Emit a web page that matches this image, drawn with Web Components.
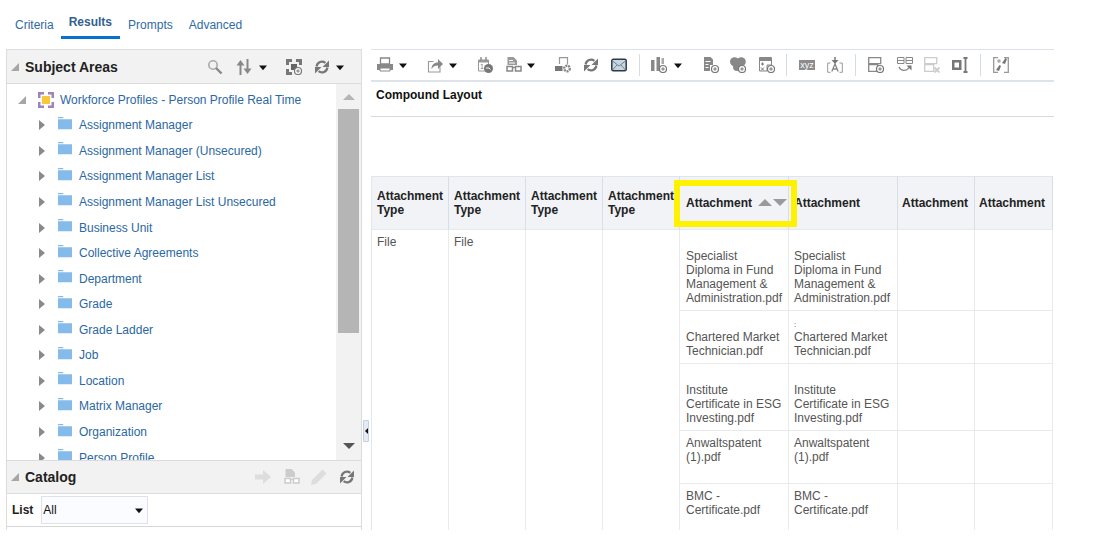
<!DOCTYPE html>
<html>
<head>
<meta charset="utf-8">
<title>Results</title>
<style>
  html, body { margin: 0; height: 100%; background: #fff; overflow: hidden; }
  body { font: 12px "Liberation Sans", Arial, sans-serif; color: #333; }
</style>
</head>
<body>
<oa-tabs></oa-tabs>
<oa-workspace>
  <oa-side-panel slot="side"></oa-side-panel>
  <oa-results slot="main"></oa-results>
</oa-workspace>

<script>
const PLUS = '<circle cx="12" cy="12" r="3.5" fill="#fff" stroke="#777" stroke-width="1.2"/><path d="M10.2 12h3.6M12 10.2v3.6" stroke="#777"/>'
const ICONS = {
  caret: '<path d="M1 3h10L6 9z" fill="#111"/>',
  search: '<circle cx="6" cy="6" r="4.2" fill="none" stroke="#aaa" stroke-width="1.6"/><path d="M9 9l5.5 5.5" stroke="#888" stroke-width="2.4"/>',
  sort: '<path d="M4.5 16V4" stroke="#888" stroke-width="2"/><path d="M.5 6.5L4.5 1l4 5.5z" fill="#888"/><path d="M11.5 0v12" stroke="#888" stroke-width="2"/><path d="M7.5 9.5l4 5.5 4-5.5z" fill="#888"/>',
  addbox: '<path d="M0 0h6v3H3v3H0zM10 0h6v6h-3V3h-3zM0 10h3v3h3v3H0z" fill="#777"/><path d="M5 5h6v4H9v2H5z" fill="#666"/>' + PLUS,
  refresh: '<path d="M2.6 7.5A5.5 5.5 0 0 1 11.4 3.8" fill="none" stroke="#777" stroke-width="2.2"/><path d="M15 1.5v6.5H8.5z" fill="#777"/><path d="M13.4 8.500A5.5 5.5 0 0 1 4.600 12.200" fill="none" stroke="#777" stroke-width="2.2"/><path d="M1 14.500V8h6.500z" fill="#777"/>',
  print: '<path d="M3.5 1h9v6h-9z" fill="none" stroke="#888" stroke-width="1.3"/><path d="M0 7h16v6H0z" fill="#888"/><path d="M3 11h10v3H3z" fill="#fff" stroke="#888"/>',
  share: '<path d="M1.5 4.5h5M1.5 4v11H13V10" fill="none" stroke="#999" stroke-width="1.1"/><path d="M4.5 12c0-4 2.500-6.500 6.500-6.500V2l5 5-5 5V8.500c-3 0-5 1-6.500 3.500z" fill="#888"/>',
  sched: '<path d="M1.5 3h10v11h-10z" fill="none" stroke="#999"/><path d="M1.5 3h10v2.500h-10z" fill="#999"/><path d="M4 0v3.500M9 0v3.500" stroke="#888" stroke-width="1.4"/><text x="3" y="12" font-size="7" font-family="Liberation Sans" fill="#777">1</text><circle cx="11.5" cy="11.5" r="4.5" fill="#777"/><path d="M9 11h3l1.500 1.500" fill="none" stroke="#fff"/>',
  glasses: '<path d="M1.5 0h6l3.500 3.500V8H1.5z" fill="#999"/><path d="M3 3.500h4M3 6h6" stroke="#fff"/><path d="M1 9.500h5.500V14H1zM9.500 9.500H15V14H9.500z" fill="#fff" stroke="#888" stroke-width="1.5"/><path d="M6.500 10.500h3" stroke="#888" stroke-width="1.2"/>',
  gearfile: '<path d="M4.5 7V.7h8V7.500" fill="none" stroke="#999" stroke-width="1.2"/><path d="M0 9h7.500v5H0z" fill="#777"/><circle cx="12" cy="11.500" r="2.800" fill="none" stroke="#888" stroke-width="2.4" stroke-dasharray="2 .8"/>',
  mail: '<rect x=".8" y="2.3" width="14.4" height="11.4" rx="1.5" fill="#c9d6e2" stroke="#2b3a46" stroke-width="1.5"/><path d="M1.5 4l6.500 5 6.500-5M1.5 13l4.500-5M14.500 13L10 8" fill="none" stroke="#6f8292"/>',
  chart: '<path d="M0 3h3.500v11H0zM5.500 0H9v14H5.500z" fill="#888"/><path d="M10.500 1H13v6h-2.500z" fill="#aaa"/>' + PLUS,
  tableadd: '<path d="M1 0h6.500L10 2.500V8H7v6H1z" fill="#888"/><path d="M2.500 4.500h5M2.500 7.500h3M2.500 10.500h3" stroke="#fff"/>' + PLUS,
  venn: '<circle cx="4.6" cy="4.8" r="4.6" fill="#888"/><circle cx="11.2" cy="4.8" r="4.6" fill="#888"/><circle cx="7" cy="10" r="4" fill="#888"/>' + PLUS,
  calc: '<path d="M.5 .5h12V8H8v6H.5z" fill="#fff" stroke="#888"/><path d="M1 1h11v3H1z" fill="#888"/><path d="M2 7h3M3.500 5.500v3M2 10.500l3 3M5 10.500l-3 3" stroke="#777"/>' + PLUS,
  textup: '<path d="M3.500 6H.7v9.300h2.800M12.500 6h2.800v9.300h-2.800" fill="none" stroke="#999"/><path d="M8 0v4" stroke="#777" stroke-width="1.5"/><path d="M4.500 3h7L8 7z" fill="#777"/><path d="M4.800 14.500L8 7l3.200 7.500M6 12h4" fill="none" stroke="#888" stroke-width="1.3"/>',
  rowadd: '<path d="M.7 .7h12v6h-12zM.7 7.700h9v6.600h-9z" fill="none" stroke="#888" stroke-width="1.3"/>' + PLUS,
  swap: '<path d="M.5 .5h6.500v6H.5zM9 .5h6.500v6H9z" fill="none" stroke="#888"/><path d="M.5 3.500H7M9 3.500h6.500" stroke="#888"/><path d="M2 10c2 4.500 7.500 4.500 10 .5" fill="none" stroke="#888" stroke-width="1.3"/><path d="M9.500 8.500h5v5z" fill="#777"/>',
  rowdel: '<path d="M.7 .7h12v6h-12zM.7 7.700h9v6.600h-9z" fill="none" stroke="#ccc" stroke-width="1.3"/><path d="M10.500 10.500l5 5M15.500 10.500l-5 5" stroke="#ccc" stroke-width="1.8"/>',
  column: '<path d="M0 3h9.500v10H0z" fill="#777"/><path d="M2.500 5.500H7v5H2.500z" fill="#fff"/><path d="M13.500 1v14M11.500 1h4M11.500 15h4" stroke="#777" stroke-width="1.8"/>',
  steps: '<path d="M5 .7H.7v14.600H5M11 .7h4.300v14.600H11" fill="none" stroke="#999" stroke-width="1.3"/><path d="M9 6l3.500-5 1.500 1-2 5zM3 13l3.500-5L8 9l-2 5z" fill="#777"/><circle cx="6" cy="4" r="1.8" fill="#aaa"/>',
  arrow: '<path d="M0 5.500h8V1L16 8l-8 7v-4.500H0z" fill="#ddd"/>',
  glasses2: '<path d="M1.500 0h6L11 3.500V8H1.500z" fill="#ccc"/><path d="M1 9.500h5.500V14H1zM9.500 9.500H15V14H9.500z" fill="#fff" stroke="#ccc" stroke-width="1.5"/><path d="M6.500 10.500h3" stroke="#ccc"/>',
  pencil: '<path d="M0 16l1-5L11.500 .5l4 4L5 15z" fill="#ddd"/>',
  folder: '<path d="M0 0h6v1.300H0zM0 2.700h16V14H0z" fill="#85bbea"/>',
  root: '<path d="M0 0h6v2.500H2.500V6H0zM10 0h6v6h-2.500V2.500H10zM0 10h2.500v3.500H6V16H0zM13.500 10H16v6h-6v-2.500h3.500z" fill="#a082bd"/><rect x="4" y="4" width="8" height="8" fill="#f8c83c"/>'
}

// one small svg, picked by name
class OaIcon extends HTMLElement {
  constructor() {
    super()
    this.attachShadow({ mode: "open" })
  }
  connectedCallback() {
    const name = this.getAttribute("name")
    const w = this.getAttribute("w") || 16
    const h = this.getAttribute("h") || w
    const box = this.getAttribute("box") || "0 0 16 16"
    this.shadowRoot.innerHTML = `
      <style>
        :host { display: block; flex: none; line-height: 0; }
        svg { display: block; }
      </style>
      <svg width="${w}" height="${h}" viewBox="${box}">${ICONS[name]}</svg>
    `
  }
}
customElements.define("oa-icon", OaIcon)

function caret() {
  return `<oa-icon name="caret" w="10" h="8" box="0 0 12 10"></oa-icon>`
}

class OaTabs extends HTMLElement {
  constructor() {
    super()
    this.attachShadow({ mode: "open" })
    this.shadowRoot.innerHTML = `
      <style>
        :host { display: flex; height: 39px; padding-left: 7px; box-sizing: border-box; color: #2f6aa5; font-size: 12px; }
        div { padding: 18px 8px 0; box-sizing: border-box; height: 39px; white-space: nowrap; }
        .on { padding: 15px 8px 0; margin-left: -1px; font-weight: bold; color: #33618f; border-bottom: 3px solid #0572ce; }
      </style>
      <div>Criteria</div><div class="on">Results</div><div>Prompts</div><div>Advanced</div>
    `
  }
}
customElements.define("oa-tabs", OaTabs)

class OaWorkspace extends HTMLElement {
  constructor() {
    super()
    this.attachShadow({ mode: "open" })
    this.shadowRoot.innerHTML = `
      <style>
        :host { display: flex; height: 491px; margin-top: 10px; padding-left: 6px; overflow: hidden; }
        .split { flex: none; width: 9px; padding-top: 371px; box-sizing: border-box; }
        .grip { width: 6px; height: 22px; margin-left: 1px; background: #e4ebf3; border: 1px solid #c4d0dc; border-radius: 1px; box-sizing: border-box; display: flex; align-items: center; justify-content: center; }
        .grip i { border: 3px solid transparent; border-right: 3px solid #111; border-left: 0; }
      </style>
      <slot name="side"></slot>
      <div class="split"><div class="grip"><i></i></div></div>
      <slot name="main"></slot>
    `
  }
}
customElements.define("oa-workspace", OaWorkspace)

class OaPanelHead extends HTMLElement {
  constructor() {
    super()
    this.attachShadow({ mode: "open" })
    this.shadowRoot.innerHTML = `
      <style>
        :host { display: flex; align-items: center; height: 34px; flex: none; box-sizing: border-box; background: #f2f2f2; border-bottom: 1px solid #dcdcdc; padding-left: 4px; }
        i { width: 0; height: 0; border-style: solid; border-width: 0 0 8px 8px; border-color: transparent transparent #a6a6a6 transparent; }
        b { margin-left: 6px; font-size: 14px; color: #222; }
        span { flex: 1; }
      </style>
      <i></i><b><slot name="title"></slot></b><span></span><slot></slot>
    `
  }
}
customElements.define("oa-panel-head", OaPanelHead)

class OaTreeItem extends HTMLElement {
  constructor() {
    super()
    this.attachShadow({ mode: "open" })
  }
  connectedCallback() {
    this.shadowRoot.innerHTML = `
      <style>
        :host { display: flex; align-items: center; height: 25.57px; padding-left: 32px; color: #2a67a3; white-space: nowrap; }
        i { width: 0; height: 0; border-style: solid; border-width: 5px 0 5px 6px; border-color: transparent transparent transparent #8a8a8a; margin-right: 12px; }
        oa-icon { margin-top: -3px; }
        span { margin-left: 6px; }
      </style>
      <i></i><oa-icon name="folder" w="16" h="14"></oa-icon><span><slot></slot></span>
    `
  }
}
customElements.define("oa-tree-item", OaTreeItem)

class OaTree extends HTMLElement {
  constructor() {
    super()
    this.attachShadow({ mode: "open" })
    const items = ["Assignment Manager", "Assignment Manager (Unsecured)", "Assignment Manager List",
      "Assignment Manager List Unsecured", "Business Unit", "Collective Agreements", "Department",
      "Grade", "Grade Ladder", "Job", "Location", "Matrix Manager", "Organization", "Person Profile"]
    this.shadowRoot.innerHTML = `
      <style>
        :host { display: flex; flex: 1; min-height: 0; overflow: hidden; }
        .list { flex: 1; padding-top: 3px; overflow: hidden; }
        .root { display: flex; align-items: center; height: 25.5px; padding-left: 11px; color: #2a67a3; white-space: nowrap; }
        .root i { width: 0; height: 0; border-style: solid; border-width: 0 0 8px 8px; border-color: transparent transparent #a6a6a6 transparent; margin-right: 12px; }
        .root span { margin-left: 6px; }
        .bar { flex: none; width: 25px; background: #f2f2f2; display: flex; flex-direction: column; align-items: center; }
        .up, .down { flex: none; height: 25px; display: flex; align-items: center; justify-content: center; }
        .up i { border: 6px solid transparent; border-top: 0; border-bottom: 6px solid #b5b5b5; }
        .down { margin-top: auto; margin-bottom: 2px; }
        .down i { border: 6px solid transparent; border-bottom: 0; border-top: 6px solid #555; }
        .thumb { width: 21px; height: 224px; background: #b5b5b5; }
      </style>
      <div class="list">
        <div class="root"><i></i><oa-icon name="root"></oa-icon><span>Workforce Profiles - Person Profile Real Time</span></div>
        ${items.map(t => `<oa-tree-item>${t}</oa-tree-item>`).join("")}
      </div>
      <div class="bar">
        <div class="up"><i></i></div>
        <div class="thumb"></div>
        <div class="down"><i></i></div>
      </div>
    `
  }
}
customElements.define("oa-tree", OaTree)

class OaSidePanel extends HTMLElement {
  constructor() {
    super()
    this.attachShadow({ mode: "open" })
    this.shadowRoot.innerHTML = `
      <style>
        :host { display: flex; flex-direction: column; flex: none; width: 356px; height: 481px; box-sizing: border-box; border: 1px solid #dcdcdc; border-bottom: 0; }
        .tools { display: flex; align-items: center; }
        .list { display: flex; align-items: center; flex: none; height: 33px; margin-bottom: 3px; padding-left: 5px; box-sizing: border-box; border-bottom: 1px solid #d6d6d6; color: #222; }
        .select { display: flex; align-items: center; justify-content: space-between; width: 107px; height: 28px; margin-left: 8px; padding: 0 3px 0 1px; box-sizing: border-box; background: #fafcff; border: 1px solid #dfe3e8; color: #111; }
        .catalog { border-top: 1px solid #dcdcdc; }
      </style>
      <oa-panel-head>
        <span slot="title">Subject Areas</span>
        <div class="tools" style="padding-right:16px">
          <oa-icon name="search" style="margin-right:13px"></oa-icon>
          <oa-icon name="sort" style="margin-right:6px"></oa-icon>
          ${caret()}
          <oa-icon name="addbox" style="margin:0 12px 0 18px"></oa-icon>
          <oa-icon name="refresh" style="margin-right:5px"></oa-icon>
          ${caret()}
        </div>
      </oa-panel-head>
      <oa-tree></oa-tree>
      <oa-panel-head class="catalog">
        <span slot="title">Catalog</span>
        <div class="tools" style="padding-right:6px">
          <oa-icon name="arrow" style="margin-right:13px"></oa-icon>
          <oa-icon name="glasses2" style="margin-right:11px"></oa-icon>
          <oa-icon name="pencil" style="margin-right:12px"></oa-icon>
          <oa-icon name="refresh"></oa-icon>
        </div>
      </oa-panel-head>
      <div class="list">
        <b>List</b>
        <div class="select"><span>All</span>${caret()}</div>
      </div>
    `
  }
}
customElements.define("oa-side-panel", OaSidePanel)

class OaToolbar extends HTMLElement {
  constructor() {
    super()
    this.attachShadow({ mode: "open" })
    // name, gap before it
    const row = [["print", 6], ["caret", 5], ["share", 19], ["caret", 5], ["sched", 19], ["glasses", 13], ["caret", 4],
      ["gearfile", 19], ["refresh", 12], ["mail", 12], ["|", 12], ["chart", 11], ["caret", 6], ["tableadd", 20],
      ["venn", 11], ["calc", 13], ["|", 11], ["xyz", 12], ["textup", 12], ["|", 12], ["rowadd", 12], ["swap", 13],
      ["rowdel", 11], ["column", 12], ["|", 12], ["steps", 12]]
    this.shadowRoot.innerHTML = `
      <style>
        :host { display: flex; align-items: center; flex: none; height: 33px; box-sizing: border-box; border-top: 1px solid #dde3ea; border-bottom: 2px solid #dde3ea; }
        .sep { flex: none; width: 1px; height: 22px; background: #d5dbe1; }
        .xyz { flex: none; width: 16px; height: 10px; background: #8c8c8c; color: #fff; font-size: 9px; line-height: 10px; text-align: center; overflow: hidden; }
      </style>
      ${row.map(([n, g]) => {
        const st = `margin-left:${g}px`
        if (n === "|") return `<div class="sep" style="${st}"></div>`
        if (n === "xyz") return `<div class="xyz" style="${st}">xyz</div>`
        if (n === "caret") return `<oa-icon name="caret" w="10" h="8" box="0 0 12 10" style="${st}"></oa-icon>`
        return `<oa-icon name="${n}" style="${st}"></oa-icon>`
      }).join("")}
    `
  }
}
customElements.define("oa-toolbar", OaToolbar)

class OaGrid extends HTMLElement {
  constructor() {
    super()
    this.attachShadow({ mode: "open" })
    const names = [["Specialist", "Diploma in Fund", "Management &amp;", "Administration.pdf"],
      ["Chartered Market", "Technician.pdf"], ["Institute", "Certificate in ESG", "Investing.pdf"],
      ["Anwaltspatent", "(1).pdf"], ["BMC -", "Certificate.pdf"]]
    // blank lines above and below the file name, as in the report
    const lead = [1, 1, 1, 0, 0]
    const tail = [0, 0, 0, 1, 2]
    const rows = names.map((lines, i) => {
      const blanks = n => Array(n).fill("&nbsp;")
      const text = [...blanks(lead[i]), ...lines, ...blanks(tail[i])].join("<br>")
      const second = i === 1 ? text.replace("&nbsp;", "<span class='dot'>:</span>") : text
      return `<div class="c first">${text}</div><div class="c second">${second}</div><div class="c"></div><div class="c"></div>`
    }).join("")
    this.shadowRoot.innerHTML = `
      <style>
        :host { display: block; position: relative; flex: none; width: 683px; height: 354px; overflow: hidden; }
        .grid { display: grid; grid-template-columns: 77px 77px 77px 77px 109px 109px 77px 78px; width: 681px; border-left: 1px solid #e3e6ea; }
        .h { height: 54px; box-sizing: border-box; display: flex; align-items: center; padding: 0 0 1px 5px; background: #f1f3f7; border-top: 1px solid #dfe5ea; border-right: 1px solid #d6dfe7; border-bottom: 1px solid #e6e9ec; font-weight: bold; color: #222; line-height: 14px; white-space: nowrap; }
        .h.first { padding-left: 6px; }
        .h.second { padding-left: 5px; }
        .h.tight { padding-left: 4px; }
        .sort { display: flex; margin-left: auto; margin-right: 1px; gap: 1px; }
        .sort i { border: 7px solid transparent; }
        .sort .u { border-top: 0; border-bottom: 7px solid #9a9a9a; }
        .sort .d { border-bottom: 0; border-top: 7px solid #9a9a9a; }
        .span { grid-row: 2 / span 5; padding: 5px; border-right: 1px solid #e8eaec; color: #555; line-height: 14px; }
        .c { padding: 5px; border-right: 1px solid #e8eaec; border-bottom: 1px solid #e8eaec; color: #555; line-height: 14px; white-space: nowrap; }
        .c.first { padding-left: 6px; }
        .c.second { padding-left: 5px; }
        .dot { font-size: 8px; line-height: 0; }
        .mark { position: absolute; left: 303px; top: 4px; width: 123px; height: 47px; box-sizing: border-box; border: 6px solid #fff200; }
      </style>
      <div class="grid">
        <div class="h"><span>Attachment<br>Type</span></div><div class="h"><span>Attachment<br>Type</span></div>
        <div class="h"><span>Attachment<br>Type</span></div><div class="h"><span>Attachment<br>Type</span></div>
        <div class="h first">Attachment<span class="sort"><i class="u"></i><i class="d"></i></span></div>
        <div class="h second">Attachment</div><div class="h tight">Attachment</div><div class="h tight">Attachment</div>
        <div class="span" style="grid-column:1">File</div><div class="span" style="grid-column:2">File</div>
        <div class="span" style="grid-column:3"></div><div class="span" style="grid-column:4"></div>
        ${rows}
      </div>
      <div class="mark"></div>
    `
    // each filename row starts after the four merged columns
    this.shadowRoot.querySelectorAll(".c").forEach((c, i) => {
      c.style.gridColumn = String(5 + i % 4)
    })
  }
}
customElements.define("oa-grid", OaGrid)

class OaResults extends HTMLElement {
  constructor() {
    super()
    this.attachShadow({ mode: "open" })
    this.shadowRoot.innerHTML = `
      <style>
        :host { display: flex; flex-direction: column; flex: none; width: 683px; height: 481px; }
        .title { flex: none; height: 35px; padding: 6px 0 0 5px; box-sizing: border-box; border-bottom: 1px solid #d9d9d9; font-weight: bold; color: #111; }
        .gap { flex: none; height: 59px; }
      </style>
      <oa-toolbar></oa-toolbar>
      <div class="title">Compound Layout</div>
      <div class="gap"></div>
      <oa-grid></oa-grid>
    `
  }
}
customElements.define("oa-results", OaResults)
</script>
</body>
</html>
